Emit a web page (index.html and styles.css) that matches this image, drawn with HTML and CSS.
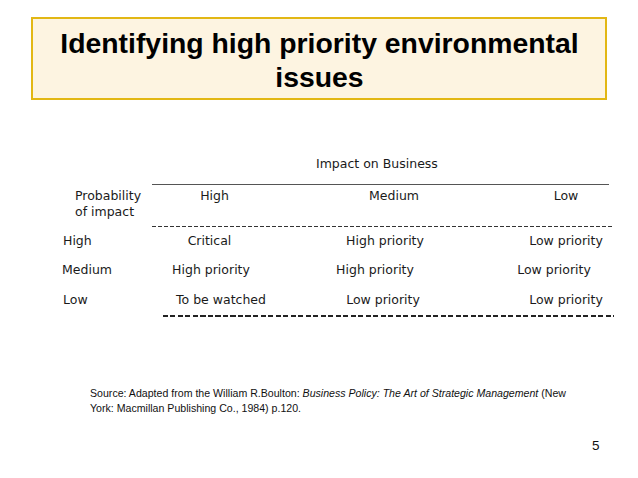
FILE: index.html
```html
<!DOCTYPE html>
<html>
<head>
<meta charset="utf-8">
<link rel="stylesheet" href="styles.css">
</head>
<body>
<div class="slide">
  <header class="title-box">
    <h1 class="title">Identifying high priority environmental<br>issues</h1>
  </header>

  <section class="matrix">
    <div class="caption">Impact on Business</div>
    <div class="rule-solid"></div>
    <div class="row head">
      <div class="lab prob">Probability<br>of impact</div>
      <div class="cell c1">High</div>
      <div class="cell c2">Medium</div>
      <div class="cell c3">Low</div>
    </div>
    <div class="rule-dash"></div>
    <div class="row r1">
      <div class="lab">High</div>
      <div class="cell c1">Critical</div>
      <div class="cell c2">High priority</div>
      <div class="cell c3">Low priority</div>
    </div>
    <div class="row r2">
      <div class="lab">Medium</div>
      <div class="cell c1">High priority</div>
      <div class="cell c2">High priority</div>
      <div class="cell c3">Low priority</div>
    </div>
    <div class="row r3">
      <div class="lab">Low</div>
      <div class="cell c1">To be watched</div>
      <div class="cell c2">Low priority</div>
      <div class="cell c3">Low priority</div>
    </div>
    <div class="rule-dash-thick"></div>
  </section>

  <p class="source">Source: Adapted from the William R.Boulton: <span class="book">Business Policy: The Art of Strategic Management</span> (New York: Macmillan Publishing Co., 1984) p.120.</p>

  <div class="page-num">5</div>
</div>
</body>
</html>
```

FILE: styles.css
```css
html, body {
  margin: 0;
  padding: 0;
  background: #ffffff;
}

.slide {
  width: 638px;
  height: 478px;
  position: relative;
  overflow: hidden;
  display: flex;
  flex-direction: column;
  font-family: "DejaVu Sans", Verdana, sans-serif;
  color: #111;
}

.title-box {
  margin: 17px 0 0 31px;
  width: 572px;
  height: 79px;
  border: 2px solid #e2b714;
  background: #fdf4e1;
  display: flex;
  align-items: center;
  justify-content: center;
}

.title {
  margin: 3px 0 0 0;
  font-family: "Liberation Sans", Arial, sans-serif;
  font-weight: bold;
  font-size: 28.5px;
  line-height: 34px;
  text-align: center;
  color: #000;
  transform: scaleX(0.995);
}

.matrix {
  margin-top: 56px;
  font-size: 12.5px;
  color: #1a1a1a;
}

.caption {
  padding-left: 316px;
  line-height: 16px;
}

.rule-solid {
  margin: 12px 0 0 152px;
  width: 457px;
  height: 1px;
  background: #555;
}

.row {
  display: grid;
  grid-template-columns: 94px 124px 222px 140px;
  padding-left: 56px;
  line-height: 16px;
}

.head {
  margin-top: 3px;
  height: 32px;
}

.lab {
  text-align: left;
  padding-left: 7px;
}

.prob {
  padding-left: 19px;
}

.cell {
  text-align: center;
}

.head .c1 { padding-left: 5px; }
.head .c2 { padding-left: 18px; }

.rule-dash {
  margin: 6px 0 0 152px;
  width: 461px;
  height: 1px;
  background: repeating-linear-gradient(to right, #333 0 4px, transparent 4px 6px);
}

.r1 { margin-top: 6px; }
.r2 { margin-top: 13px; }
.r3 { margin-top: 14px; }

.r1 .c1 { padding-right: 5px; }
.r2 .lab { padding-left: 6px; }
.r2 .c1 { padding-right: 2px; }
.r2 .c2 { padding-right: 20px; }
.r2 .c3 { padding-right: 24px; }
.r3 .c1 { padding-left: 18px; }
.r3 .c2 { padding-right: 4px; }

.rule-dash-thick {
  margin: 7px 0 0 163px;
  width: 451px;
  height: 2px;
  background: repeating-linear-gradient(to right, #222 0 5px, transparent 5px 7.5px);
}

.source {
  margin: 69px 0 0 90px;
  width: 490px;
  font-family: "Liberation Sans", Arial, sans-serif;
  font-size: 10.6px;
  line-height: 15px;
  color: #111;
}

.book {
  font-style: italic;
}

.page-num {
  margin: 22px 0 0 592px;
  font-family: "Liberation Sans", Arial, sans-serif;
  font-size: 13.5px;
  line-height: 16px;
  color: #111;
}
```
